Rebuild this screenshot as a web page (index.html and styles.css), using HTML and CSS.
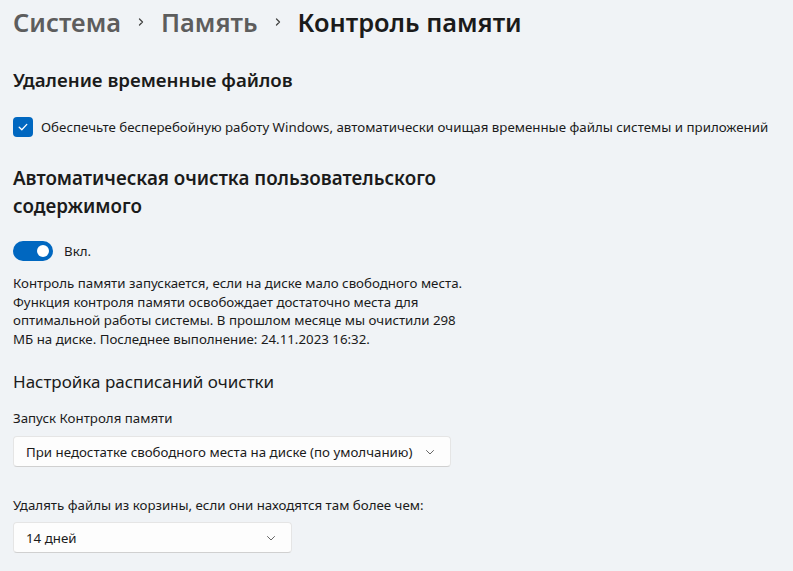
FILE: index.html
```html
<!DOCTYPE html>
<html>
<head>
    <title>Контроль памяти</title>
    <link rel="stylesheet" href="styles.css">
</head>
<body>
    <div class="page">
        <div class="breadcrumb">
            <span class="crumb">Система</span>
            <svg class="crumb-sep" width="10" height="10" viewBox="0 0 10 10"><path d="M3.5 2 L6.5 5 L3.5 8" fill="none" stroke="#444" stroke-width="1.3" stroke-linecap="round" stroke-linejoin="round"/></svg>
            <span class="crumb">Память</span>
            <svg class="crumb-sep" width="10" height="10" viewBox="0 0 10 10"><path d="M3.5 2 L6.5 5 L3.5 8" fill="none" stroke="#444" stroke-width="1.3" stroke-linecap="round" stroke-linejoin="round"/></svg>
            <span class="crumb current">Контроль памяти</span>
        </div>

        <h2 class="title-temp">Удаление временные файлов</h2>
        <label class="check-row">
            <span class="checkbox">
                <svg width="12" height="12" viewBox="0 0 12 12"><path d="M2.2 6.3 L4.8 8.8 L9.8 3.4" fill="none" stroke="#fff" stroke-width="1.3" stroke-linecap="round" stroke-linejoin="round"/></svg>
            </span>
            <span>Обеспечьте бесперебойную работу Windows, автоматически очищая временные файлы системы и приложений</span>
        </label>

        <div class="narrow">
            <h2 class="title-auto">Автоматическая очистка пользовательского содержимого</h2>
            <div class="toggle-row">
                <span class="toggle"><span class="knob"></span></span>
                <span>Вкл.</span>
            </div>
            <p class="desc">Контроль памяти запускается, если на диске мало свободного места. Функция контроля памяти освобождает достаточно места для оптимальной работы системы. В прошлом месяце мы очистили 298 МБ на диске. Последнее выполнение: 24.11.2023 16:32.</p>
        </div>

        <h3 class="subtitle">Настройка расписаний очистки</h3>
        <div class="field-label first">Запуск Контроля памяти</div>
        <div class="select wide">
            <span>При недостатке свободного места на диске (по умолчанию)</span>
            <svg width="12" height="12" viewBox="0 0 12 12"><path d="M2.5 4.5 L6 8 L9.5 4.5" fill="none" stroke="#666" stroke-width="1" stroke-linecap="round" stroke-linejoin="round"/></svg>
        </div>
        <div class="field-label second">Удалять файлы из корзины, если они находятся там более чем:</div>
        <div class="select short">
            <span>14 дней</span>
            <svg width="12" height="12" viewBox="0 0 12 12"><path d="M2.5 4.5 L6 8 L9.5 4.5" fill="none" stroke="#666" stroke-width="1" stroke-linecap="round" stroke-linejoin="round"/></svg>
        </div>
    </div>
</body>
</html>
```

FILE: styles.css
```css
body {
    margin: 0;
    padding: 0;
    background-color: #f0f3f6;
    font-family: "Noto Sans", "Open Sans", sans-serif;
    color: #1b1b1b;
    font-size: 13.3px;
}

.page {
    display: flex;
    flex-direction: column;
    align-items: flex-start;
    padding: 0 13px;
}

.breadcrumb {
    display: flex;
    align-items: center;
    height: 44px;
    font-size: 25.4px;
    font-weight: 600;
}

.crumb {
    color: #5d5d5d;
}

.crumb.current {
    color: #1b1b1b;
}

.crumb-sep {
    margin: 0 15px;
}

h2, h3, p {
    margin: 0;
}

.title-temp {
    margin-top: 24px;
    font-size: 18.7px;
    line-height: 24px;
    font-weight: 600;
}

.check-row {
    display: flex;
    align-items: center;
    gap: 8px;
    margin-top: 25px;
    height: 20px;
}

.checkbox {
    display: flex;
    align-items: center;
    justify-content: center;
    width: 20px;
    height: 20px;
    border-radius: 4px;
    background-color: #0067c0;
}

.narrow {
    width: 452px;
}

.title-auto {
    margin-top: 27px;
    font-size: 18.8px;
    line-height: 28px;
    font-weight: 600;
}

.toggle-row {
    display: flex;
    align-items: center;
    gap: 11px;
    margin-top: 21px;
    height: 20px;
}

.toggle {
    display: flex;
    align-items: center;
    justify-content: flex-end;
    width: 40px;
    height: 20px;
    border-radius: 10px;
    background-color: #0067c0;
    padding: 0 4px;
    box-sizing: border-box;
}

.knob {
    width: 12px;
    height: 12px;
    border-radius: 50%;
    background-color: #fff;
}

.desc {
    margin-top: 13px;
    line-height: 18.5px;
}

.subtitle {
    margin-top: 22px;
    font-size: 17px;
    line-height: 24px;
    font-weight: 400;
}

.field-label {
    line-height: 18px;
}

.field-label.first {
    margin-top: 15px;
}

.field-label.second {
    margin-top: 29px;
}

.select {
    display: flex;
    align-items: center;
    justify-content: space-between;
    box-sizing: border-box;
    height: 31px;
    padding: 0 14px 0 12px;
    background-color: #fdfdfd;
    border: 1px solid #e5e5e5;
    border-bottom-color: #d0d0d0;
    border-radius: 4px;
}

.select.wide {
    margin-top: 9px;
    width: 438px;
}

.select.short {
    margin-top: 8px;
    width: 279px;
}
```
